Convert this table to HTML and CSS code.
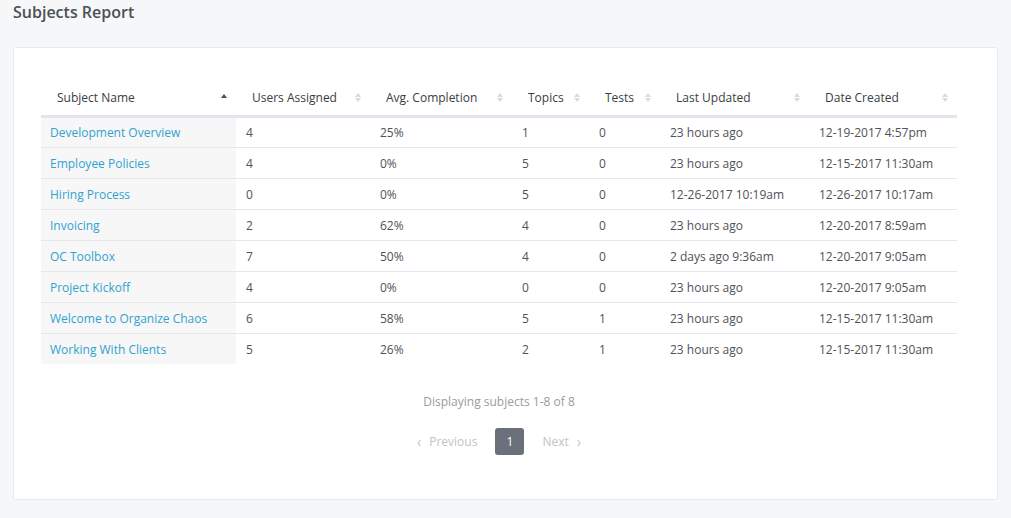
FILE: index.html
```html
<!DOCTYPE html>
<html>
<head>
<meta charset="utf-8">
<link rel="stylesheet" href="styles.css">
</head>
<body>
<h1 class="page-title">Subjects Report</h1>
<div class="card">
  <div class="table-wrap">
    <table class="report">
      <colgroup>
        <col style="width:195px"><col style="width:134px"><col style="width:142px"><col style="width:77px"><col style="width:71px"><col style="width:149px"><col style="width:148px">
      </colgroup>
      <thead>
        <tr>
          <th><span>Subject Name</span><i class="sort asc"></i></th>
          <th><span>Users Assigned</span><i class="sort"></i></th>
          <th><span>Avg. Completion</span><i class="sort"></i></th>
          <th><span>Topics</span><i class="sort"></i></th>
          <th><span>Tests</span><i class="sort"></i></th>
          <th><span>Last Updated</span><i class="sort"></i></th>
          <th><span>Date Created</span><i class="sort"></i></th>
        </tr>
      </thead>
      <tbody>
        <tr><td><a href="#">Development Overview</a></td><td>4</td><td>25%</td><td>1</td><td>0</td><td>23 hours ago</td><td>12-19-2017 4:57pm</td></tr>
        <tr><td><a href="#">Employee Policies</a></td><td>4</td><td>0%</td><td>5</td><td>0</td><td>23 hours ago</td><td>12-15-2017 11:30am</td></tr>
        <tr><td><a href="#">Hiring Process</a></td><td>0</td><td>0%</td><td>5</td><td>0</td><td>12-26-2017 10:19am</td><td>12-26-2017 10:17am</td></tr>
        <tr><td><a href="#">Invoicing</a></td><td>2</td><td>62%</td><td>4</td><td>0</td><td>23 hours ago</td><td>12-20-2017 8:59am</td></tr>
        <tr><td><a href="#">OC Toolbox</a></td><td>7</td><td>50%</td><td>4</td><td>0</td><td>2 days ago 9:36am</td><td>12-20-2017 9:05am</td></tr>
        <tr><td><a href="#">Project Kickoff</a></td><td>4</td><td>0%</td><td>0</td><td>0</td><td>23 hours ago</td><td>12-20-2017 9:05am</td></tr>
        <tr><td><a href="#">Welcome to Organize Chaos</a></td><td>6</td><td>58%</td><td>5</td><td>1</td><td>23 hours ago</td><td>12-15-2017 11:30am</td></tr>
        <tr><td><a href="#">Working With Clients</a></td><td>5</td><td>26%</td><td>2</td><td>1</td><td>23 hours ago</td><td>12-15-2017 11:30am</td></tr>
      </tbody>
    </table>
    <div class="summary">Displaying subjects 1-8 of 8</div>
    <div class="pager">
      <span class="pager-link"><span class="chev">&#8249;</span>Previous</span>
      <span class="pager-page">1</span>
      <span class="pager-link">Next<span class="chev right">&#8250;</span></span>
    </div>
  </div>
</div>
</body>
</html>
```

FILE: styles.css
```css
html, body {
  margin: 0;
  padding: 0;
}
body {
  background: #f6f7f9;
  font-family: "Open Sans", "Liberation Sans", sans-serif;
  color: #4f5257;
  width: 1011px;
  height: 518px;
  overflow: hidden;
}
.page-title {
  margin: 0;
  padding: 1px 0 0 13px;
  font-size: 16px;
  font-weight: 600;
  line-height: 22px;
  color: #4b5056;
}
.card {
  margin: 24px 0 0 13px;
  width: 985px;
  height: 453px;
  background: #fff;
  border: 1px solid #e9eaee;
  border-radius: 3px;
  padding: 34px 0 0 27px;
  box-sizing: border-box;
}
.table-wrap {
  width: 916px;
}
.report {
  width: 916px;
  border-collapse: collapse;
  table-layout: fixed;
  font-size: 12px;
}
.report th {
  height: 34px;
  padding: 0 9px 2px 16px;
  text-align: left;
  font-weight: 400;
  color: #3a3d42;
  border-bottom: 3px solid #e4e5ec;
  position: relative;
  box-sizing: border-box;
  white-space: nowrap;
}
.report th span {
  vertical-align: middle;
}
.sort {
  position: absolute;
  right: 8px;
  top: 11px;
  width: 7px;
  height: 9px;
}
.sort::before, .sort::after {
  content: "";
  position: absolute;
  left: 0;
  border-left: 3.5px solid transparent;
  border-right: 3.5px solid transparent;
}
.sort::before {
  top: 0;
  border-bottom: 4px solid #d8dadd;
}
.sort::after {
  top: 5px;
  border-top: 4px solid #d8dadd;
}
.sort.asc::before {
  border-bottom-color: #4a4d52;
  top: 1px;
}
.sort.asc::after {
  display: none;
}
.report td {
  height: 31px;
  padding: 1px 9px 0 10px;
  box-sizing: border-box;
  color: #4f5257;
  border-bottom: 1px solid #e6e7ec;
  white-space: nowrap;
}
.report td:first-child {
  background: #f7f7f7;
  padding-left: 9px;
}
.report tbody tr:last-child td {
  border-bottom: none;
}
.report a {
  color: #2fa3cf;
  text-decoration: none;
}
.summary {
  margin-top: 29px;
  text-align: center;
  font-size: 12px;
  color: #9a9ca0;
  line-height: 18px;
}
.pager {
  margin-top: 17px;
  display: flex;
  justify-content: center;
  align-items: center;
  gap: 18px;
  font-size: 12px;
}
.pager-link {
  color: #c1c3c7;
  display: flex;
  align-items: center;
}
.chev {
  font-size: 14px;
  margin-right: 8px;
  line-height: 1;
}
.chev.right {
  margin-right: 0;
  margin-left: 8px;
}
.pager-page {
  width: 29px;
  height: 27px;
  border-radius: 3px;
  background: #6b707a;
  color: #fff;
  display: flex;
  align-items: center;
  justify-content: center;
}
```
